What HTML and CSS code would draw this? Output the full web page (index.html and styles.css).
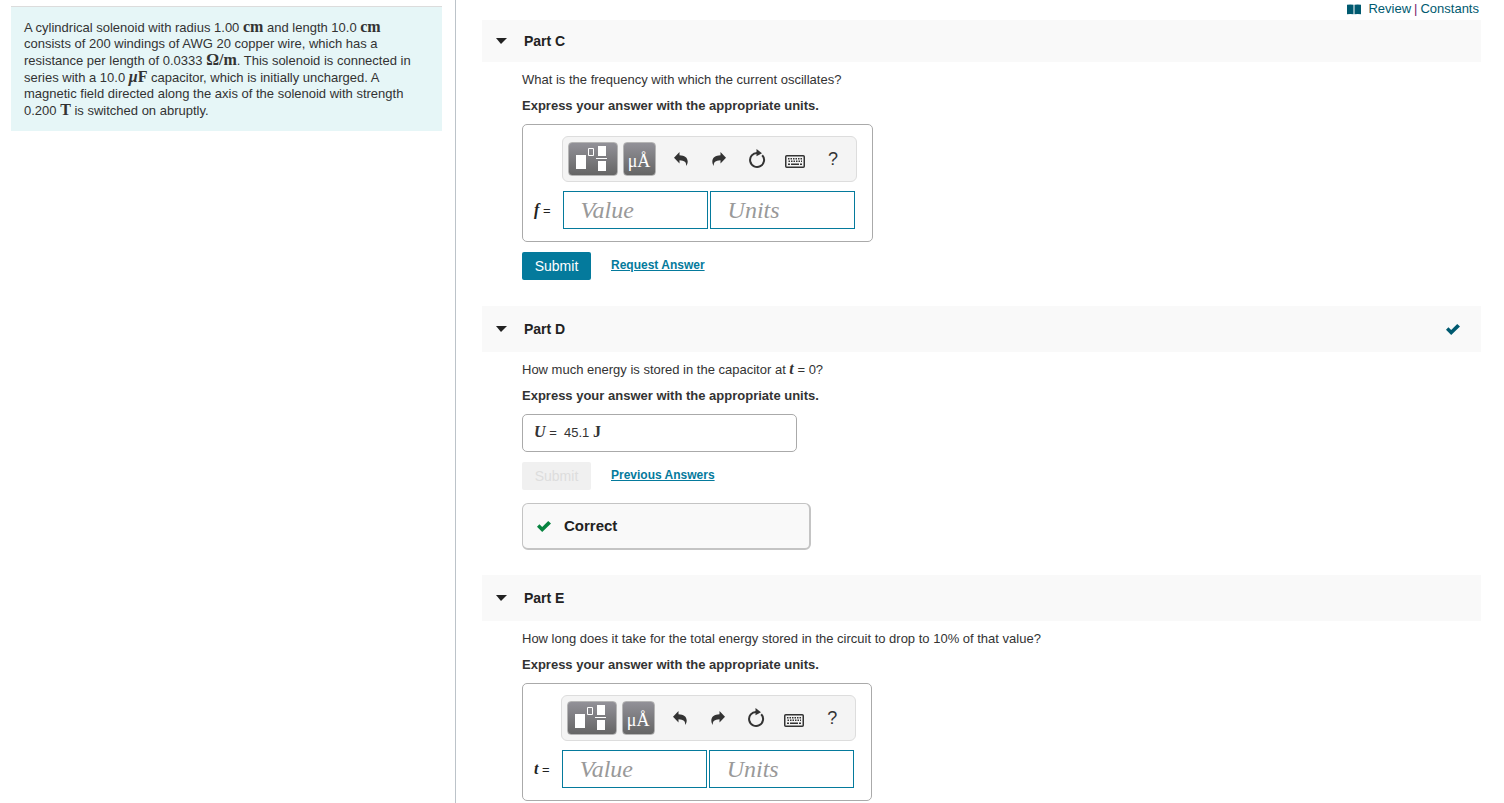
FILE: index.html
```html
<!DOCTYPE html>
<html lang="en">
<head>
<meta charset="utf-8">
<meta name="viewport" content="width=device-width, initial-scale=1">
<title>Solenoid and capacitor</title>
<link rel="stylesheet" href="styles.css">
</head>
<body>
<svg class="sprite" aria-hidden="true">
  <symbol id="i-template" viewBox="0 0 34 26">
    <path fill="#fff" d="M0 9h10v14H0zM22 0h8v10h-8zM22 15h8v10h-8zM20 12h11v1H20z"/>
    <path fill="none" stroke="#fff" d="M12.500 2.500h5v7h-5z"/>
  </symbol>
  <symbol id="i-undo" viewBox="0 0 14 14">
    <path fill="#333" d="M5.500 0v3.200c5 .1 8.200 2.300 8.200 6.300 0 1.700-.6 3.200-1.600 4.500.5-3.600-1.600-5.600-6.600-5.700v3.200L0 5.800z"/>
  </symbol>
  <symbol id="i-redo" viewBox="0 0 14 14">
    <path fill="#333" d="M8.500 0v3.200C3.500 3.300.3 5.500.3 9.500c0 1.700.6 3.200 1.600 4.500-.5-3.600 1.600-5.600 6.600-5.700v3.200L14 5.800z"/>
  </symbol>
  <symbol id="i-reset" viewBox="0 0 18 20">
    <path fill="none" stroke="#333" stroke-width="2" d="M9.500 4A7 7 0 1 0 14.200 6.200"/>
    <path fill="#333" d="M8.500 0l5.500 4.300-5.500 3z"/>
  </symbol>
  <symbol id="i-keyboard" viewBox="0 0 20 13">
    <rect x=".75" y=".75" width="18.500" height="11.500" rx="1" fill="none" stroke="#333" stroke-width="1.500"/>
    <path fill="none" stroke="#333" stroke-width="1.500" stroke-dasharray="1.500 1" d="M3 3.700h14M3.500 6.200h13.500"/>
    <path fill="none" stroke="#333" stroke-width="1.500" d="M3 9.300h2M6 9.300h8M15 9.300h2"/>
  </symbol>
  <symbol id="i-check" viewBox="0 0 14 11">
    <path d="M0 5.700L2.400 3.300 5.200 6 11.200 0 14 2.500 5.200 11z"/>
  </symbol>
  <symbol id="i-book" viewBox="0 0 14 11">
    <path d="M0 .8Q3.500 0 6.500 .8v9.500Q3.500 9.500 0 10.300zM7.500 .8q3-.8 6.500 0v9.500q-3.500-.8-6.500 0z"/>
  </symbol>
</svg>

<div class="page">
  <aside class="intro">
    <p class="problem">A cylindrical solenoid with radius 1.00 <span class="unit">cm</span> and length 10.0 <span class="unit">cm</span> consists of 200 windings of AWG 20 copper wire, which has a resistance per length of 0.0333 <span class="unit">Ω/m</span>. This solenoid is connected in series with a 10.0 <span class="unit"><i>μ</i>F</span> capacitor, which is initially uncharged. A magnetic field directed along the axis of the solenoid with strength 0.200 <span class="unit">T</span> is switched on abruptly.</p>
  </aside>

  <main class="parts">
    <nav class="links">
      <svg class="book" viewBox="0 0 14 11" aria-hidden="true"><use href="#i-book"/></svg>
      <a href="#review">Review</a><span class="bar">|</span><a href="#constants">Constants</a>
    </nav>

    <section class="part">
      <h2 class="part-head first"><button class="toggle" type="button"><span class="caret"></span>Part C</button></h2>
      <div class="part-body">
        <p class="question">What is the frequency with which the current oscillates?</p>
        <p class="instruction">Express your answer with the appropriate units.</p>
        <div class="entry">
          <div class="toolbar">
            <button class="tool dark wide" type="button" aria-label="Templates"><svg width="34" height="26"><use href="#i-template"/></svg></button>
            <button class="tool dark chars" type="button" aria-label="Symbols">μÅ</button>
            <button class="tool" type="button" aria-label="Undo"><svg width="14" height="14"><use href="#i-undo"/></svg></button>
            <button class="tool" type="button" aria-label="Redo"><svg width="14" height="14"><use href="#i-redo"/></svg></button>
            <button class="tool" type="button" aria-label="Reset"><svg width="18" height="20"><use href="#i-reset"/></svg></button>
            <button class="tool low" type="button" aria-label="Keyboard shortcuts"><svg width="20" height="13"><use href="#i-keyboard"/></svg></button>
            <button class="tool" type="button" aria-label="Help">?</button>
          </div>
          <label class="symbol" for="value-c"><i>f</i> =</label>
          <div class="fields">
            <input class="field" id="value-c" type="text" placeholder="Value">
            <input class="field" type="text" placeholder="Units" aria-label="Units">
          </div>
        </div>
        <div class="actions">
          <button class="submit" type="button">Submit</button>
          <a class="more" href="#request">Request Answer</a>
        </div>
      </div>
    </section>

    <section class="part">
      <h2 class="part-head"><button class="toggle" type="button"><span class="caret"></span>Part D</button><svg class="done" viewBox="0 0 14 11" role="img" aria-label="Completed"><use href="#i-check"/></svg></h2>
      <div class="part-body">
        <p class="question">How much energy is stored in the capacitor at <span class="unit"><i>t</i></span> = 0?</p>
        <p class="instruction">Express your answer with the appropriate units.</p>
        <div class="answer"><span class="unit"><i>U</i></span> = &nbsp;45.1 <span class="unit">J</span></div>
        <div class="actions">
          <button class="submit" type="button" disabled>Submit</button>
          <a class="more" href="#previous">Previous Answers</a>
        </div>
        <div class="result"><svg class="tick" viewBox="0 0 14 11" aria-hidden="true"><use href="#i-check"/></svg>Correct</div>
      </div>
    </section>

    <section class="part">
      <h2 class="part-head"><button class="toggle" type="button"><span class="caret"></span>Part E</button></h2>
      <div class="part-body">
        <p class="question">How long does it take for the total energy stored in the circuit to drop to 10% of that value?</p>
        <p class="instruction">Express your answer with the appropriate units.</p>
        <div class="entry">
          <div class="toolbar">
            <button class="tool dark wide" type="button" aria-label="Templates"><svg width="34" height="26"><use href="#i-template"/></svg></button>
            <button class="tool dark chars" type="button" aria-label="Symbols">μÅ</button>
            <button class="tool" type="button" aria-label="Undo"><svg width="14" height="14"><use href="#i-undo"/></svg></button>
            <button class="tool" type="button" aria-label="Redo"><svg width="14" height="14"><use href="#i-redo"/></svg></button>
            <button class="tool" type="button" aria-label="Reset"><svg width="18" height="20"><use href="#i-reset"/></svg></button>
            <button class="tool low" type="button" aria-label="Keyboard shortcuts"><svg width="20" height="13"><use href="#i-keyboard"/></svg></button>
            <button class="tool" type="button" aria-label="Help">?</button>
          </div>
          <label class="symbol" for="value-e"><i>t</i> =</label>
          <div class="fields">
            <input class="field" id="value-e" type="text" placeholder="Value">
            <input class="field" type="text" placeholder="Units" aria-label="Units">
          </div>
        </div>
      </div>
    </section>
  </main>
</div>
</body>
</html>
```

FILE: styles.css
```css
* { box-sizing: border-box; }

body {
  margin: 0;
  background: #fff;
  color: #333;
  font: 13px/16px "Liberation Sans", Arial, sans-serif;
}

button, input { font: inherit; margin: 0; }
p, h2 { margin: 0; }
svg { display: block; }
.sprite { position: absolute; width: 0; height: 0; }

.page {
  display: grid;
  grid-template-columns: minmax(240px, 456px) minmax(0, 1fr);
  min-height: 100vh;
}

.intro {
  padding: 6px 13px 0 11px;
  border-right: 1px solid #bcc3c9;
}

.problem {
  padding: 12px 13px;
  border-top: 1px solid #dcdcdc;
  background: #e6f6f7;
}

.unit {
  font-family: "Liberation Serif", "Times New Roman", serif;
  font-size: 16px;
  font-weight: bold;
  line-height: 16px;
}

.parts { padding: 0 23px 0 26px; }

.links {
  display: flex;
  align-items: center;
  justify-content: flex-end;
  height: 20px;
  padding: 0 2px 2px 0;
}
.links a { color: #005a70; text-decoration: none; }
.book { width: 14px; height: 11px; margin-right: 7px; fill: #005a70; }
.bar { margin: 0 3px; color: #7b1e6b; }

.part { padding-bottom: 25px; }
.part:first-of-type { padding-bottom: 26px; }
.part:last-child { padding-bottom: 0; }

.part-head {
  display: flex;
  align-items: center;
  justify-content: space-between;
  height: 46px;
  padding: 0 21px 0 14px;
  background: #f9f9f9;
}
.part-head.first { height: 42px; }

.toggle {
  display: flex;
  align-items: center;
  gap: 17px;
  padding: 0;
  border: 0;
  background: none;
  color: #222;
  font-size: 14px;
  font-weight: bold;
}
.caret {
  border: 6px solid transparent;
  border-top-color: #222;
  border-bottom: 0;
  border-left-width: 5px;
  border-right-width: 6px;
}
.done { width: 14px; height: 11px; fill: #005a70; }

.part-body { padding: 10px 0 0 40px; }
.question { margin-bottom: 10px; }
.instruction { margin-bottom: 10px; font-weight: bold; }
.question .unit { line-height: 1px; }

.entry {
  display: grid;
  grid-template-columns: auto 295px;
  gap: 9px 11px;
  width: fit-content;
  padding: 11px 15px 12px 11px;
  border: 1px solid #aaa;
  border-radius: 5px;
}

.toolbar {
  grid-column: 2;
  display: flex;
  align-items: center;
  gap: 5px;
  height: 46px;
  padding: 0 5px;
  border: 1px solid #ddd;
  border-radius: 6px;
  background: #f4f4f4;
}
.tool {
  display: flex;
  align-items: center;
  justify-content: center;
  width: 33px;
  height: 34px;
  padding: 0;
  border: 0;
  background: none;
  color: #333;
  font-size: 18px;
}
.tool.dark {
  flex: none;
  border: 1px solid #b5b5b5;
  border-radius: 4px;
  background: linear-gradient(#929198, #656565);
  color: #fff;
  font-family: "Liberation Serif", "Times New Roman", serif;
}
.tool.wide { width: 50px; }
.tool.chars { margin-right: 4px; padding-top: 4px; }
.tool.low { padding-top: 4px; }

.symbol {
  align-self: center;
  color: #222;
  font-size: 13px;
}
.symbol i {
  font-family: "Liberation Serif", "Times New Roman", serif;
  font-size: 16px;
  font-weight: bold;
}
.fields { display: flex; gap: 2px; padding: 0 2px 0 1px; }
.field {
  flex: 1;
  min-width: 0;
  height: 38px;
  padding: 0 17px;
  border: 1px solid #047a9c;
  border-radius: 0;
  background: #fff;
  color: #333;
  font-family: "Liberation Serif", "Times New Roman", serif;
  font-size: 24px;
}
.field::placeholder { color: #999; font-style: italic; opacity: 1; }

.actions { display: flex; align-items: center; gap: 20px; margin-top: 10px; }
.submit {
  width: 69px;
  height: 28px;
  padding: 0;
  border: 0;
  border-radius: 2px;
  background: #047a9c;
  color: #fff;
  font-size: 14px;
}
.submit:disabled { background: #f0f0f0; color: #ddd; }
.more { padding-bottom: 2px; color: #047a9c; font-size: 12px; font-weight: bold; }

.answer {
  max-width: 275px;
  height: 38px;
  padding: 0 11px;
  border: 1px solid #aaa;
  border-radius: 5px;
  line-height: 36px;
}
.result {
  display: flex;
  align-items: center;
  gap: 13px;
  max-width: 289px;
  height: 47px;
  margin-top: 13px;
  padding: 0 14px;
  border: solid #c4c4c4;
  border-width: 1px 2px 2px 1px;
  border-radius: 6px;
  background: #f9f9f9;
  color: #222;
  font-size: 15px;
  font-weight: bold;
}
.tick { width: 14px; height: 11px; fill: #078440; }
```
